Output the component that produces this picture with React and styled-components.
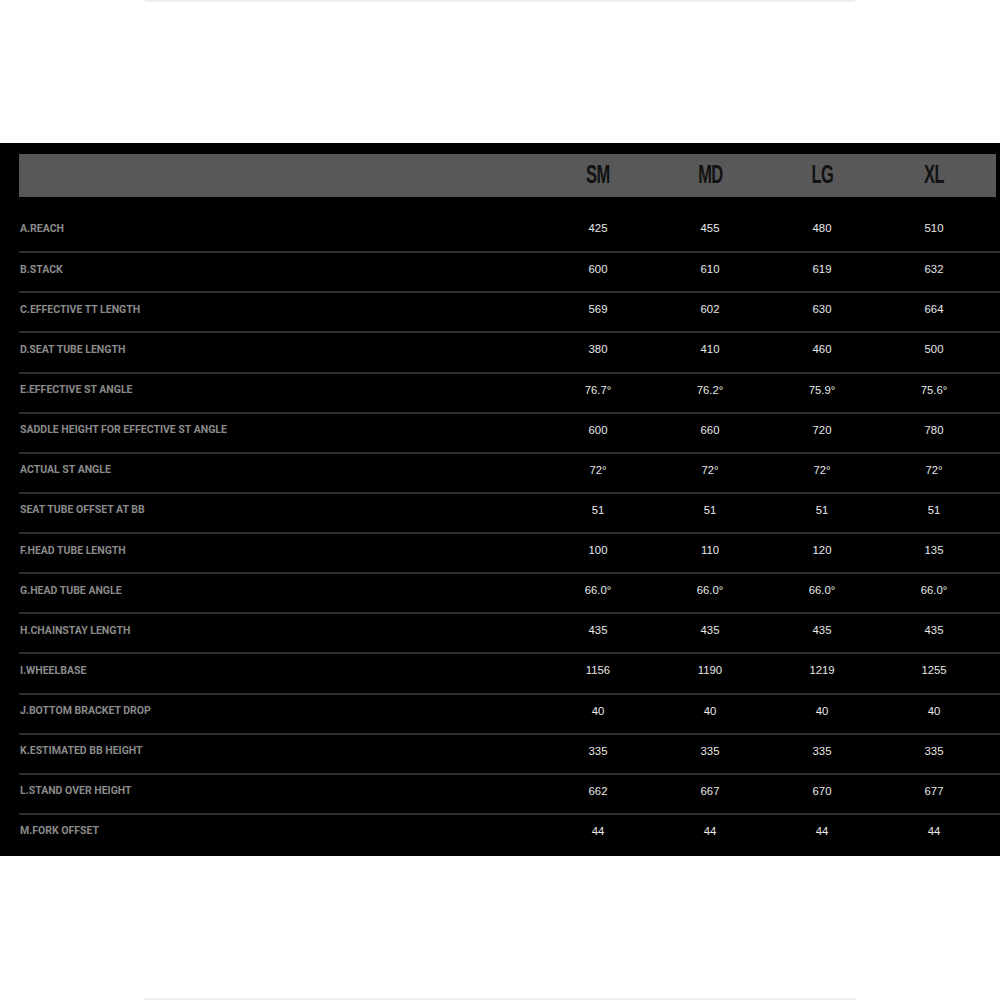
import React from 'react';
import styled, { createGlobalStyle } from 'styled-components';

const GlobalStyle = createGlobalStyle`
  html, body {
    margin: 0;
    padding: 0;
    background: #ffffff;
  }
  body {
    font-family: Roboto, 'Liberation Sans', Arial, sans-serif;
  }
`;

const Page = styled.div`
  width: 1000px;
  height: 1000px;
  display: flex;
  flex-direction: column;
  background: #fff;
`;

const Rule = styled.div`
  height: 2px;
  margin: ${(p) => (p.bottom ? '0 144px 0 144px' : '0 145px 0 145px')};
  background: #efefef;
`;

const Gap = styled.div`
  height: ${(p) => p.h}px;
  flex: none;
`;

const Panel = styled.div`
  background: #000;
  height: 713px;
  box-sizing: border-box;
  padding: 11px 0 3px 19px;
  display: flex;
  flex-direction: column;
`;

const HeaderBar = styled.div`
  height: 43px;
  margin-right: 4px;
  background: #585858;
  display: grid;
  grid-template-columns: 523px repeat(4, 112px);
  align-items: center;
`;

const SizeCell = styled.div`
  text-align: center;
  padding-bottom: 2px;
`;

const SizeText = styled.span`
  display: inline-block;
  font-family: 'Liberation Sans', Arial, sans-serif;
  font-weight: 700;
  font-size: 25px;
  line-height: 1;
  letter-spacing: -1px;
  color: #121212;
  transform: scaleX(0.66);
`;

const Body = styled.div`
  margin-top: 14px;
  display: flex;
  flex-direction: column;
`;

const Row = styled.div`
  height: 40.13px;
  box-sizing: border-box;
  border-top: ${(p) => (p.first ? 'none' : '2px solid #2f2f2f')};
  display: grid;
  grid-template-columns: 523px repeat(4, 112px);
  align-items: center;
  padding-bottom: 6px;
`;

const Label = styled.div`
  font-family: Roboto, 'Liberation Sans', sans-serif;
  font-weight: 700;
  font-size: 10.5px;
  letter-spacing: 0;
  color: #8a8a8a;
  padding-left: 1px;
`;

const Value = styled.div`
  text-align: center;
  font-family: 'Liberation Sans', Arial, sans-serif;
  font-size: 11.3px;
  color: #e8e8e8;
`;

const sizes = ['SM', 'MD', 'LG', 'XL'];

const rows = [
  ['A.REACH', '425', '455', '480', '510'],
  ['B.STACK', '600', '610', '619', '632'],
  ['C.EFFECTIVE TT LENGTH', '569', '602', '630', '664'],
  ['D.SEAT TUBE LENGTH', '380', '410', '460', '500'],
  ['E.EFFECTIVE ST ANGLE', '76.7°', '76.2°', '75.9°', '75.6°'],
  ['SADDLE HEIGHT FOR EFFECTIVE ST ANGLE', '600', '660', '720', '780'],
  ['ACTUAL ST ANGLE', '72°', '72°', '72°', '72°'],
  ['SEAT TUBE OFFSET AT BB', '51', '51', '51', '51'],
  ['F.HEAD TUBE LENGTH', '100', '110', '120', '135'],
  ['G.HEAD TUBE ANGLE', '66.0°', '66.0°', '66.0°', '66.0°'],
  ['H.CHAINSTAY LENGTH', '435', '435', '435', '435'],
  ['I.WHEELBASE', '1156', '1190', '1219', '1255'],
  ['J.BOTTOM BRACKET DROP', '40', '40', '40', '40'],
  ['K.ESTIMATED BB HEIGHT', '335', '335', '335', '335'],
  ['L.STAND OVER HEIGHT', '662', '667', '670', '677'],
  ['M.FORK OFFSET', '44', '44', '44', '44'],
];

export default function App() {
  return (
    <Page>
      <GlobalStyle />
      <Rule />
      <Gap h={141} />
      <Panel>
        <HeaderBar>
          <div />
          {sizes.map((s) => (
            <SizeCell key={s}>
              <SizeText>{s}</SizeText>
            </SizeCell>
          ))}
        </HeaderBar>
        <Body>
          {rows.map(([label, ...vals], i) => (
            <Row key={label} first={i === 0}>
              <Label>{label}</Label>
              {vals.map((v, j) => (
                <Value key={j}>{v}</Value>
              ))}
            </Row>
          ))}
        </Body>
      </Panel>
      <Gap h={142} />
      <Rule bottom />
    </Page>
  );
}
